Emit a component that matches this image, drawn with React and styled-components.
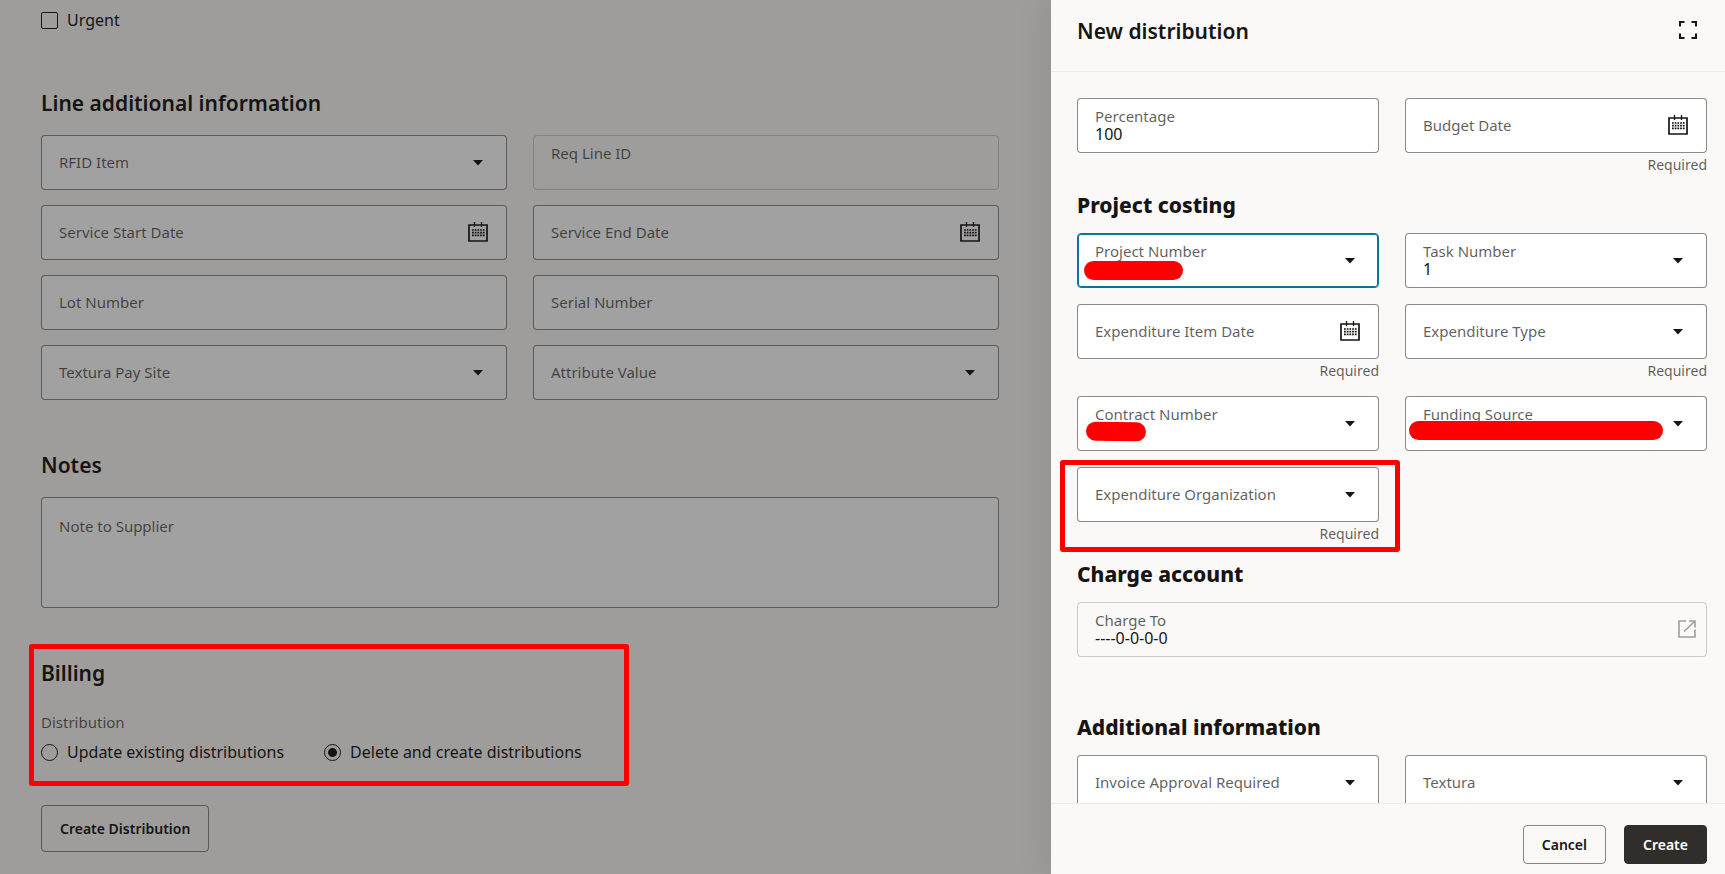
import React from "react"
import styled, { createGlobalStyle, css } from "styled-components"

const GlobalStyle = createGlobalStyle`
  *,
  *::before,
  *::after {
    box-sizing: border-box;
  }

  body {
    margin: 0;
    background: #faf9f7;
    color: #161513;
    font-family: "Noto Sans", "Open Sans", sans-serif;
    font-size: 16px;
    line-height: 20px;
  }

  button,
  input,
  select,
  textarea {
    margin: 0;
    font: inherit;
    color: inherit;
  }
`

const Page = styled.div`
  position: relative;
  display: flex;
  min-height: 100vh;
`

const Backdrop = styled.div`
  position: absolute;
  inset: 0;
  z-index: 1;
  background: rgba(22, 21, 19, 0.4);
`

const Main = styled.main`
  flex: 1;
  min-width: 0;
  padding: 8px 52px 20px 41px;
`

const Heading = styled.h2`
  margin: 0 0 18px;
  font-size: 21px;
  font-weight: 600;
  line-height: 28px;
`

const Section = styled.section`
  position: relative;
  margin-top: 51px;
`

const FieldGrid = styled.div`
  display: grid;
  grid-template-columns: 1fr 1fr;
  align-items: start;
  gap: ${props => props.$rowGap}px 26px;
`

const Choice = styled.label`
  display: flex;
  align-items: center;
  gap: 9px;
  line-height: 24px;
`

const LineOptions = styled.div`
  padding-bottom: 6px;
`

const Checkbox = styled.input`
  appearance: none;
  width: 17px;
  height: 17px;
  border: 1px solid #161513;
  border-radius: 2px;
`

const Radio = styled.input`
  appearance: none;
  width: 17px;
  height: 17px;
  border: 1px solid #161513;
  border-radius: 50%;

  &:checked {
    background: radial-gradient(circle, #161513 4px, transparent 5px);
  }
`

const RadioGroup = styled.fieldset`
  display: flex;
  flex-wrap: wrap;
  gap: 0 40px;
  margin: 25px 0 41px;
  padding: 0;
  border: 0;

  legend {
    margin-bottom: 8px;
    padding: 0;
    font-size: 15px;
    color: rgba(22, 21, 19, 0.7);
  }
`

/* outlined field, the label sits over the control */
const Box = styled.div`
  position: relative;
  display: grid;
  grid-template-columns: 1fr auto;
  height: 55px;
  border: 1px solid rgba(22, 21, 19, 0.5);
  border-radius: 4px;
  background: #fff;

  ${props =>
    props.$readOnly &&
    css`
      border-color: rgba(22, 21, 19, 0.2);
      background: transparent;
    `}

  ${props =>
    props.$active &&
    css`
      border-color: #0f7596;
      box-shadow: inset 0 0 0 1px #0f7596;
    `}

  ${props =>
    props.$tall &&
    css`
      height: 111px;
    `}
`

const Label = styled.label`
  grid-area: 1 / 1;
  align-self: ${props => (props.$raised ? "start" : "center")};
  z-index: 1;
  padding: ${props => (props.$raised ? "7px 0 0 17px" : "0 0 2px 17px")};
  font-size: 15px;
  color: rgba(22, 21, 19, 0.7);
  pointer-events: none;
`

const NoteLabel = styled(Label)`
  align-self: start;
  padding-top: 18px;
`

const control = css`
  grid-area: 1 / 1 / 2 / -1;
  appearance: none;
  width: 100%;
  min-width: 0;
  padding: 25px 48px 8px 17px;
  border: 0;
  outline: 0;
  background: transparent;
`

const Input = styled.input`
  ${control}
`

const Select = styled.select`
  ${control}
`

const TextArea = styled.textarea`
  ${control}
  resize: none;
`

const IconSlot = styled.span`
  grid-area: 1 / 2;
  display: flex;
  align-items: center;
  justify-content: center;
  width: 38px;
  padding-right: 18px;
  pointer-events: none;
`

const IconButton = styled.button`
  grid-area: 1 / 2;
  display: flex;
  align-items: center;
  justify-content: center;
  z-index: 1;
  padding: 0 ${props => props.$inset}px 2px 0;
  border: 0;
  background: none;
  color: ${props => (props.$muted ? "#a09f9d" : "#161513")};
`

const Hint = styled.div`
  height: 21px;
  padding-top: 2px;
  font-size: 14px;
  line-height: 20px;
  text-align: right;
  color: rgba(22, 21, 19, 0.7);
`

const Button = styled.button`
  height: ${props => (props.$large ? 47 : 39)}px;
  padding: 0 18px;
  border: 1px solid rgba(22, 21, 19, 0.5);
  border-radius: 4px;
  background: transparent;
  font-size: 14px;
  font-weight: 600;

  ${props =>
    props.$primary &&
    css`
      border-color: #312d2a;
      background: #312d2a;
      color: #fff;
    `}
`

const Drawer = styled.aside`
  position: sticky;
  top: 0;
  z-index: 2;
  display: flex;
  flex: 0 1 674px;
  flex-direction: column;
  height: 100vh;
  background: #faf9f7;
  box-shadow: 0 0 32px rgba(22, 21, 19, 0.12);
`

const DrawerHeader = styled.header`
  display: flex;
  align-items: center;
  justify-content: space-between;
  padding: 17px 0 26px 26px;
  border-bottom: 1px solid #ecebea;

  h1 {
    margin: 0;
    font-size: 21px;
    font-weight: 600;
    line-height: 28px;
  }
`

const DrawerBody = styled.div`
  flex: 1;
  min-height: 0;
  padding: 26px 18px 26px 26px;
  overflow-y: auto;
  scrollbar-width: none;
`

const DrawerSection = styled.section`
  margin-top: ${props => (props.$spaced ? 56 : 17)}px;

  ${Heading} {
    margin-bottom: 14px;
    font-weight: 800;
  }
`

const DrawerFooter = styled.footer`
  display: flex;
  justify-content: flex-end;
  gap: 18px;
  padding: 21px 18px 10px;
  border-top: 1px solid #ecebea;
`

/* red frame drawn around a block */
const Frame = styled.div`
  position: absolute;
  z-index: 2;
  border: 5px solid #f00;
  border-radius: 3px;
  pointer-events: none;
`

const BillingFrame = styled(Frame)`
  top: -15px;
  left: -12px;
  width: 600px;
  height: 142px;
`

const FieldFrame = styled(Frame)`
  inset: -7px -21px -9px -17px;
`

const Framed = styled.div`
  position: relative;
`

/* marker stroke that covers a value */
const Marker = styled.span`
  position: absolute;
  z-index: 2;
  top: ${props => props.$top}px;
  left: ${props => props.$left}px;
  width: ${props => props.$width}px;
  height: 19px;
  border-radius: 10px;
  background: #f00;
  transform: rotate(${props => props.$tilt || 0}deg);
`

const CaretIcon = () => (
  <svg width="10" height="6" viewBox="0 0 10 6" aria-hidden="true">
    <path d="M0 0h10L5 5.5z" fill="#161513" />
  </svg>
)

const CalendarIcon = () => (
  <svg width="20" height="20" viewBox="0 0 20 20" aria-hidden="true">
    <path d="M1 3h18v16H1z" fill="none" stroke="#161513" strokeWidth="1.7" />
    <path d="M6.5 0v5M13.5 0v5" stroke="#161513" strokeWidth="1.3" />
    <path
      d="M4 8h13M4 10.7h13M4 13.4h13"
      stroke="#161513"
      strokeWidth="1.7"
      strokeDasharray="1.8 0.9"
    />
  </svg>
)

const ExpandIcon = () => (
  <svg width="18" height="18" viewBox="0 0 18 18" aria-hidden="true">
    <path
      d="M1 5.5V1h4.5M12.5 1H17v4.5M17 12.5V17h-4.5M5.5 17H1v-4.5"
      fill="none"
      stroke="currentColor"
      strokeWidth="2"
    />
  </svg>
)

const OpenIcon = () => (
  <svg width="18" height="18" viewBox="0 0 18 18" aria-hidden="true">
    <path
      d="M8 1H1v16h16V9.5M6 11.5L16.5 1.5M11 1h6v6.5"
      fill="none"
      stroke="currentColor"
      strokeWidth="1.6"
    />
  </svg>
)

function Field({ id, label, value = "", type = "text", raised, active, hint, readOnly, children }) {
  const up = raised || value !== ""
  return (
    <div>
      <Box $active={active} $readOnly={readOnly}>
        <Label htmlFor={id} $raised={up}>
          {label}
        </Label>
        {type === "select" ? (
          <Select id={id} defaultValue={value}>
            <option value={value}>{value}</option>
          </Select>
        ) : (
          <Input id={id} type="text" defaultValue={value} readOnly={readOnly} />
        )}
        {type === "select" && (
          <IconSlot>
            <CaretIcon />
          </IconSlot>
        )}
        {type === "date" && (
          <IconButton type="button" $inset={18} aria-label="Select date">
            <CalendarIcon />
          </IconButton>
        )}
        {type === "link" && (
          <IconButton type="button" $inset={10} $muted aria-label="Open">
            <OpenIcon />
          </IconButton>
        )}
        {children}
      </Box>
      {hint && <Hint>{hint}</Hint>}
    </div>
  )
}

function RequisitionLine() {
  return (
    <Main>
      <LineOptions>
        <Choice>
          <Checkbox type="checkbox" />
          Urgent
        </Choice>
      </LineOptions>

      <Section>
        <Heading>Line additional information</Heading>
        <FieldGrid $rowGap={15}>
          <Field id="rfid" label="RFID Item" type="select" />
          <Field id="req-line" label="Req Line ID" raised readOnly />
          <Field id="start" label="Service Start Date" type="date" />
          <Field id="end" label="Service End Date" type="date" />
          <Field id="lot" label="Lot Number" />
          <Field id="serial" label="Serial Number" />
          <Field id="pay-site" label="Textura Pay Site" type="select" />
          <Field id="attribute" label="Attribute Value" type="select" />
        </FieldGrid>
      </Section>

      <Section>
        <Heading>Notes</Heading>
        <Box $tall>
          <NoteLabel htmlFor="note">Note to Supplier</NoteLabel>
          <TextArea id="note" />
        </Box>
      </Section>

      <Section>
        <BillingFrame />
        <Heading>Billing</Heading>
        <RadioGroup>
          <legend>Distribution</legend>
          <Choice>
            <Radio type="radio" name="distribution" />
            Update existing distributions
          </Choice>
          <Choice>
            <Radio type="radio" name="distribution" defaultChecked />
            Delete and create distributions
          </Choice>
        </RadioGroup>
        <Button type="button" $large>
          Create Distribution
        </Button>
      </Section>
    </Main>
  )
}

function DistributionDrawer() {
  return (
    <Drawer>
      <DrawerHeader>
        <h1>New distribution</h1>
        <IconButton type="button" $inset={28} aria-label="Full screen">
          <ExpandIcon />
        </IconButton>
      </DrawerHeader>

      <DrawerBody>
        <FieldGrid $rowGap={16}>
          <Field id="percentage" label="Percentage" value="100" />
          <Field id="budget" label="Budget Date" type="date" hint="Required" />
        </FieldGrid>

        <DrawerSection>
          <Heading>Project costing</Heading>
          <FieldGrid $rowGap={16}>
            <Field id="project" label="Project Number" type="select" raised active>
              <Marker $top={27} $left={6} $width={99} />
            </Field>
            <Field id="task" label="Task Number" type="select" value="1" />
            <Field id="item-date" label="Expenditure Item Date" type="date" hint="Required" />
            <Field id="exp-type" label="Expenditure Type" type="select" hint="Required" />
            <Field id="contract" label="Contract Number" type="select" raised>
              <Marker $top={25} $left={8} $width={60} $tilt={1} />
            </Field>
            <Field id="funding" label="Funding Source" type="select" raised>
              <Marker $top={24} $left={3} $width={254} />
            </Field>
            <Framed>
              <Field
                id="organization"
                label="Expenditure Organization"
                type="select"
                hint="Required"
              />
              <FieldFrame />
            </Framed>
          </FieldGrid>
        </DrawerSection>

        <DrawerSection>
          <Heading>Charge account</Heading>
          <Field id="charge" label="Charge To" value="----0-0-0-0" type="link" readOnly />
        </DrawerSection>

        <DrawerSection $spaced>
          <Heading>Additional information</Heading>
          <FieldGrid $rowGap={16}>
            <Field id="approval" label="Invoice Approval Required" type="select" />
            <Field id="textura" label="Textura" type="select" />
          </FieldGrid>
        </DrawerSection>
      </DrawerBody>

      <DrawerFooter>
        <Button type="button">Cancel</Button>
        <Button type="button" $primary>
          Create
        </Button>
      </DrawerFooter>
    </Drawer>
  )
}

function App() {
  return (
    <>
      <GlobalStyle />
      <Page>
        <RequisitionLine />
        <Backdrop />
        <DistributionDrawer />
      </Page>
    </>
  )
}

export default App
